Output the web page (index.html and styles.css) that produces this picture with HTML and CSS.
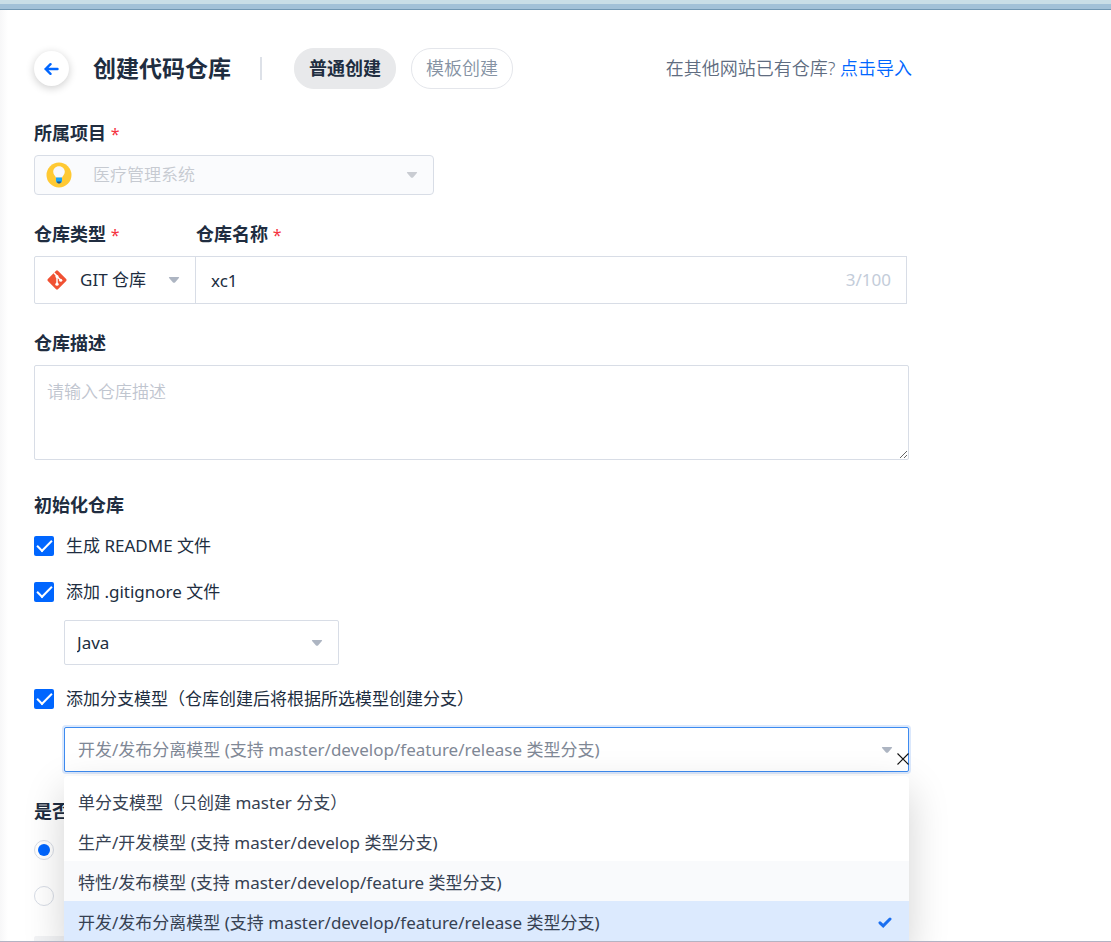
FILE: index.html
```html
<!DOCTYPE html>
<html lang="zh-CN">
<head>
<meta charset="utf-8">
<meta name="viewport" content="width=device-width, initial-scale=1">
<title>创建代码仓库</title>
<link rel="stylesheet" href="styles.css">
</head>
<body>
<div class="page">
  <div class="window-edge"></div>
  <main class="content">
    <header class="header">
      <button class="back" type="button" aria-label="返回">
        <svg width="16" height="14" viewBox="0 0 16 14" fill="none" stroke="#0066ff" stroke-width="2.4" stroke-linecap="round" stroke-linejoin="round"><path d="M13.500 7H1.500M6.500 2.200 1.600 7l4.900 4.800"/></svg>
      </button>
      <h1 class="title">创建代码仓库</h1>
      <span class="divider"></span>
      <div class="modes">
        <button class="mode mode-active" type="button">普通创建</button>
        <button class="mode" type="button">模板创建</button>
      </div>
      <p class="import">在其他网站已有仓库? <a class="link" href="#import">点击导入</a></p>
    </header>

    <form class="form">
      <div class="field">
        <label class="label" for="project">所属项目 <span class="required">*</span></label>
        <div class="control project">
          <svg class="lead" width="26" height="26" viewBox="0 0 26 26"><circle cx="13" cy="13" r="12.5" fill="#ffc933"/><path d="M13 4.200c-3.400 0-5.800 2.500-5.800 5.600 0 2.600 2 3.800 2.800 6h6c.8-2.200 2.800-3.400 2.800-6 0-3.100-2.400-5.600-5.800-5.600z" fill="#f7f8fc"/><path d="M10 15.500h6v3.500c0 1-1.200 2.500-3 2.500s-3-1.500-3-2.500z" fill="#19a3f5"/><path d="M11 19.500h4c0 1.200-.9 2-2 2s-2-.8-2-2z" fill="#31506f"/></svg>
          <select class="box" id="project" disabled><option>医疗管理系统</option></select>
          <svg class="caret" width="12" height="6" viewBox="0 0 12 6"><path d="M1.500 0h9q1 .3.400 1.100L7 5.400q-1 .8-2 0L1.100 1.100Q.5.300 1.500 0z"/></svg>
        </div>
      </div>

      <div class="field repo">
        <div class="repo-type">
          <label class="label" for="type">仓库类型 <span class="required">*</span></label>
          <div class="control type">
            <svg class="lead" width="22" height="22" viewBox="0 0 20 20"><rect x="3.500" y="3.500" width="13" height="13" rx="1.200" transform="rotate(45 10 10)" fill="#f05133"/><path d="M7.200 3.500l2.800 3V14M10 6.800l3.300 3.300" fill="none" stroke="#fff" stroke-width="1.300"/><circle cx="10" cy="6.800" r="1.400" fill="#fff"/><circle cx="10" cy="13.800" r="1.500" fill="#fff"/><circle cx="13.400" cy="10.200" r="1.400" fill="#fff"/></svg>
            <select class="box" id="type"><option>GIT 仓库</option></select>
            <svg class="caret" width="12" height="6" viewBox="0 0 12 6"><path d="M1.500 0h9q1 .3.400 1.100L7 5.400q-1 .8-2 0L1.100 1.100Q.5.300 1.500 0z"/></svg>
          </div>
        </div>
        <div class="repo-name">
          <label class="label" for="name">仓库名称 <span class="required">*</span></label>
          <div class="control name">
            <input class="box" id="name" type="text" value="xc1">
            <span class="count">3/100</span>
          </div>
        </div>
      </div>

      <div class="field">
        <label class="label" for="desc">仓库描述</label>
        <textarea class="box desc" id="desc" placeholder="请输入仓库描述"></textarea>
      </div>

      <section class="init">
        <h2 class="label">初始化仓库</h2>
        <label class="choice first"><input class="check" type="checkbox" checked>生成 README 文件</label>
        <label class="choice"><input class="check" type="checkbox" checked>添加 .gitignore 文件</label>
        <div class="control language">
          <select class="box" aria-label="gitignore 模板"><option>Java</option></select>
          <svg class="caret" width="12" height="6" viewBox="0 0 12 6"><path d="M1.500 0h9q1 .3.400 1.100L7 5.400q-1 .8-2 0L1.100 1.100Q.5.300 1.500 0z"/></svg>
        </div>
        <label class="choice"><input class="check" type="checkbox" checked>添加分支模型（仓库创建后将根据所选模型创建分支）</label>
        <div class="control model">
          <input class="box" type="text" role="combobox" aria-label="分支模型" aria-expanded="true" aria-controls="models" placeholder="开发/发布分离模型 (支持 master/develop/feature/release 类型分支)">
          <svg class="caret" width="12" height="6" viewBox="0 0 12 6"><path d="M1.500 0h9q1 .3.400 1.100L7 5.400q-1 .8-2 0L1.100 1.100Q.5.300 1.500 0z"/></svg>
          <ul class="menu" id="models" role="listbox">
            <li class="option" role="option">单分支模型（只创建 master 分支）</li>
            <li class="option" role="option">生产/开发模型 (支持 master/develop 类型分支)</li>
            <li class="option option-hover" role="option">特性/发布模型 (支持 master/develop/feature 类型分支)</li>
            <li class="option option-selected" role="option" aria-selected="true">开发/发布分离模型 (支持 master/develop/feature/release 类型分支)
              <svg width="14" height="11" viewBox="0 0 14 11" fill="none" stroke="#1a6ff0" stroke-width="3" stroke-linecap="round"><path d="M2 5.800 5.200 8.800 12 2"/></svg>
            </li>
          </ul>
          <svg class="cross" width="12" height="12" viewBox="0 0 12 12" stroke="#111" stroke-width="1.100"><path d="M.5.500l11 11M11.500.500l-11 11"/></svg>
        </div>
      </section>

      <fieldset class="visibility">
        <legend class="label">是否</legend>
        <div class="choice first"><input class="radio" type="radio" name="open" aria-label="私有" checked></div>
        <div class="choice"><input class="radio" type="radio" name="open" aria-label="公开"></div>
      </fieldset>
      <div class="notice"></div>
    </form>
  </main>
</div>
</body>
</html>
```

FILE: styles.css
```css
* { box-sizing: border-box; }

body {
  margin: 0;
  background: #fff;
  color: #202d40;
  font: 350 17px/24px "Noto Sans", "Noto Sans CJK SC", sans-serif;
}

button, input, select, textarea {
  font: inherit;
  color: inherit;
}

.page {
  position: relative;
  height: 100vh;
  overflow: hidden;
  border-bottom: 1px solid #b3b3c3;
  background: linear-gradient(to right, #f7f7f8, #fff 8px);
}

.window-edge {
  height: 10px;
  border-bottom: 1px solid #7197b2;
  background: linear-gradient(#c9dee6 4px, #a2c1d7 4px);
}

.content {
  max-width: 943px;
  padding: 38px 34px 0;
}

.header {
  display: flex;
  align-items: center;
  margin-bottom: 32px;
}

.back {
  display: grid;
  place-items: center;
  width: 35px;
  height: 35px;
  padding: 0;
  border: 0;
  border-radius: 50%;
  background: #fff;
  box-shadow: 0 2px 8px rgba(0, 0, 0, .2);
}

.title {
  margin: 0 0 0 24px;
  padding-bottom: 2px;
  font-size: 23px;
  line-height: 32px;
  font-weight: 700;
}

.divider {
  width: 2px;
  height: 23px;
  margin: 0 32px 0 29px;
  background: #dde1e8;
}

.modes {
  display: flex;
  gap: 15px;
}

.mode {
  height: 41px;
  padding: 0 14px 1px;
  border: 1px solid #e4e6eb;
  border-radius: 20px;
  background: #fff;
  color: #8592a3;
  font-size: 18px;
}

.mode-active {
  border-color: #e8e9eb;
  background: #e8e9eb;
  color: #202d40;
  font-weight: 700;
}

.import {
  margin: 0 -3px 0 auto;
  padding-bottom: 1px;
  color: #606c80;
  font-size: 18px;
  white-space: nowrap;
}

.link {
  color: #0066ff;
  text-decoration: none;
}

.field { margin-bottom: 27px; }

.label {
  display: block;
  height: 24px;
  margin: 0 0 10px;
  padding: 0;
  font-size: 18px;
  line-height: 24px;
  font-weight: 700;
}

.required {
  color: #f5333f;
  font-weight: 400;
  font-size: 16px;
  line-height: 16px;
}

.control {
  position: relative;
  display: flex;
  font-weight: 400;
}

.box {
  width: 100%;
  height: 45px;
  padding: 0 12px;
  border: 1px solid #d8dde6;
  border-radius: 2px;
  background: #fff;
  appearance: none;
  outline: 0;
}

.lead {
  position: absolute;
  left: 12px;
  top: 50%;
  transform: translateY(-50%);
}

.caret {
  position: absolute;
  right: 16px;
  top: 50%;
  transform: translateY(-50%);
  fill: #adb5c2;
}

.project {
  max-width: 400px;
  font-weight: 350;
}

.project .box {
  height: 40px;
  padding-left: 58px;
  border-radius: 4px;
  background: #fafbfd;
  color: #c6cad1;
  opacity: 1;
}

.project .caret { fill: #c9ccd2; }

.repo {
  display: flex;
  padding-right: 2px;
}

.repo-type { width: 162px; }

.repo-name {
  flex: 1;
  margin-left: -1px;
}

.repo-name .label { margin-left: 1px; }

.type .box, .name .box { height: 48px; }

.type .box {
  padding-left: 45px;
  border-radius: 2px 0 0 2px;
}

.name .box {
  padding: 0 80px 0 15px;
  border-radius: 0;
}

.count {
  position: absolute;
  right: 16px;
  top: 12px;
  color: #c3ccd9;
}

.desc {
  display: block;
  height: 95px;
  padding: 14px 12px;
  resize: vertical;
}

.box::placeholder {
  color: #bfc5cf;
  opacity: 1;
}

.init { padding-top: 6px; }

.choice {
  display: flex;
  align-items: center;
  gap: 12px;
  height: 24px;
  margin-top: 22px;
  font-weight: 400;
}

.choice.first { margin-top: 17px; }

.check, .radio {
  appearance: none;
  flex: none;
  display: grid;
  place-items: center;
  width: 20px;
  height: 20px;
  margin: 0;
}

.check {
  border-radius: 2px;
  background: #0066ff;
}

.check::before {
  content: "";
  width: 13px;
  height: 6px;
  margin-bottom: 4px;
  border: solid #fff;
  border-width: 0 0 2px 2px;
  transform: rotate(-45deg);
}

.language {
  width: 275px;
  margin: 16px 0 0 30px;
}

.model {
  margin: 16px 0 0 30px;
}

.model > .box {
  padding: 0 40px 0 13px;
  border-color: #3d8bf0;
  box-shadow: 0 0 0 2px #dbe8fc;
}

.model > .box::placeholder { color: #7f8896; }

.menu {
  position: absolute;
  z-index: 1;
  top: 49px;
  left: 0;
  right: 0;
  margin: 0;
  padding: 5px 0;
  border-radius: 4px;
  background: #fff;
  box-shadow: 0 14px 40px rgba(0, 0, 0, .18);
  color: #364152;
  list-style: none;
}

.option {
  display: flex;
  align-items: center;
  justify-content: space-between;
  height: 40px;
  padding: 3px 17px 0 14px;
}

.option-hover { background: #f9fafc; }

.option-selected { background: #dceafe; }

.cross {
  position: absolute;
  z-index: 2;
  right: 0;
  top: 26px;
}

.visibility {
  margin: 27px 0 28px;
  padding: 0;
  border: 0;
}

.visibility .label { margin: 0; }

.visibility .first { margin-top: 15px; }

.radio {
  border: 1px solid #d8dde6;
  border-radius: 50%;
  background: #fff;
}

.radio:checked::before {
  content: "";
  width: 12px;
  height: 12px;
  border-radius: 50%;
  background: #0066ff;
}

.notice {
  height: 48px;
  border-radius: 2px;
  background: #f2f3f5;
}
```
